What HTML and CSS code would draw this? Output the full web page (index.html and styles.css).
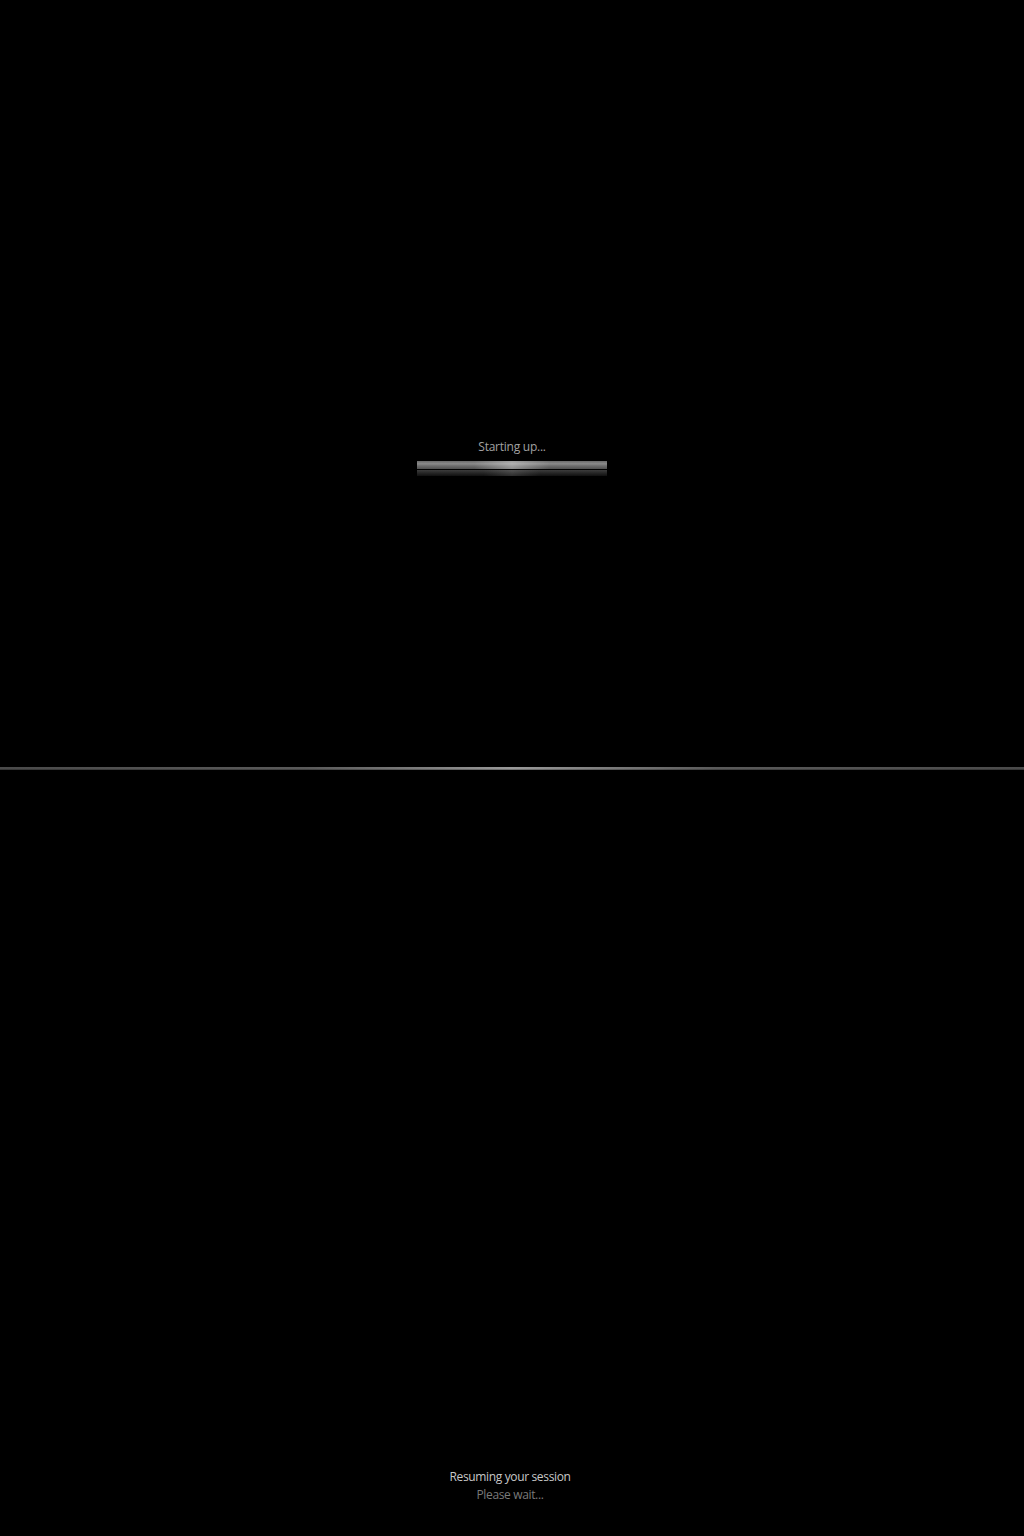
FILE: index.html
```html
<!DOCTYPE html>
<html>
<head>
<meta charset="utf-8">
<link rel="stylesheet" href="styles.css">
</head>
<body>
<div class="screen">
  <section class="top">
    <div class="loader">
      <div class="status">Starting up...</div>
      <div class="bar"></div>
      <div class="bar-reflect"></div>
    </div>
  </section>
  <div class="divider"></div>
  <section class="bottom">
    <div class="resume">
      <div class="resume-title">Resuming your session</div>
      <div class="resume-sub">Please wait...</div>
    </div>
  </section>
</div>
</body>
</html>
```
FILE: styles.css
```css
html, body {
  margin: 0;
  padding: 0;
  background: #000;
}
.screen {
  width: 1024px;
  height: 1536px;
  display: flex;
  flex-direction: column;
  background: #000;
  font-family: "Open Sans", "Noto Sans", "DejaVu Sans", sans-serif;
}
.top {
  height: 767px;
  display: flex;
  justify-content: center;
}
.loader {
  margin-top: 438px;
  width: 190px;
  display: flex;
  flex-direction: column;
  align-items: center;
}
.status {
  font-size: 12px;
  line-height: 18px;
  color: #a2a2a2;
  letter-spacing: -0.25px;
  height: 23px;
}
.bar {
  width: 190px;
  height: 8px;
  background:
    linear-gradient(to right, rgba(255,255,255,0) 30%, rgba(255,255,255,0.35) 50%, rgba(255,255,255,0) 70%),
    linear-gradient(to bottom, #6a6a6a 0%, #8a8a8a 35%, #6e6e6e 60%, #505050 100%);
}
.bar-reflect {
  margin-top: 1px;
  width: 190px;
  height: 6px;
  background:
    linear-gradient(to right, rgba(255,255,255,0) 35%, rgba(255,255,255,0.12) 50%, rgba(255,255,255,0) 65%),
    linear-gradient(to bottom, #3c3c3c 0%, #262626 50%, #101010 100%);
}
.divider {
  height: 3px;
  background:
    linear-gradient(to bottom, rgba(0,0,0,0) 0%, rgba(0,0,0,0) 66%, rgba(0,0,0,0.5) 100%),
    linear-gradient(to right, #4a4a4a 0%, #5a5a5a 30%, #9a9a9a 50%, #5a5a5a 70%, #4a4a4a 100%);
}
.bottom {
  flex: 1;
  display: flex;
  justify-content: center;
  align-items: flex-end;
}
.resume {
  margin-bottom: 32px;
  margin-right: 4px;
  display: flex;
  flex-direction: column;
  align-items: center;
  font-size: 12px;
  line-height: 18px;
  letter-spacing: -0.35px;
}
.resume-title {
  color: #c8c8c8;
}
.resume-sub {
  color: #7a7a7a;
}
```
